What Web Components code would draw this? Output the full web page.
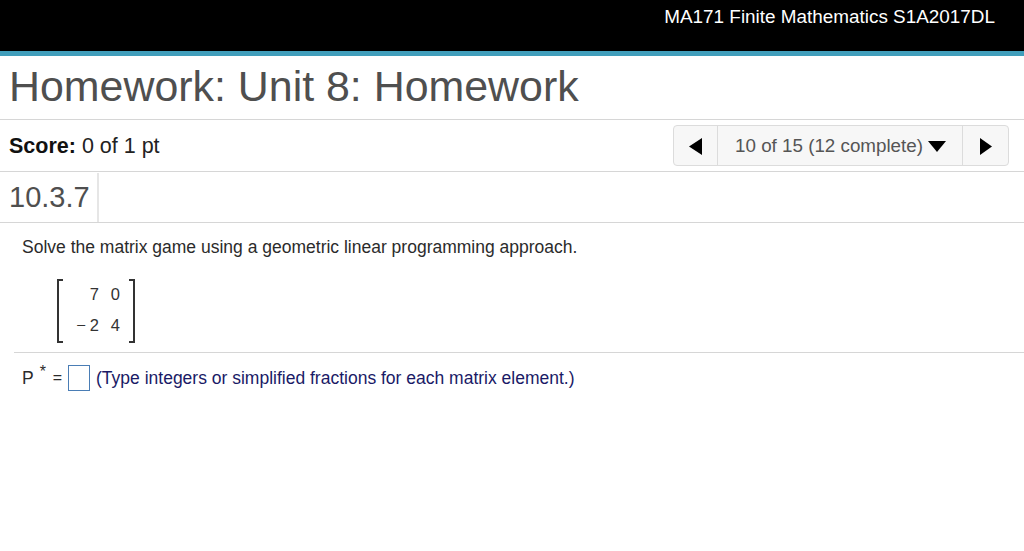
<!DOCTYPE html>
<html><head><meta charset="utf-8">
<style>
html,body{margin:0;padding:0;background:#fff;font-family:"Liberation Sans",Arial,sans-serif;}
body{width:1024px;height:551px;overflow:hidden}
</style></head>
<body>
<hw-topbar>MA171 Finite Mathematics S1A2017DL</hw-topbar>
<hw-title>Homework: Unit 8: Homework</hw-title>
<hw-score></hw-score>
<hw-qnum>10.3.7</hw-qnum>
<hw-question></hw-question>
<script>
function def(name, html){
  customElements.define(name, class extends HTMLElement{
    constructor(){super();this.attachShadow({mode:'open'}).innerHTML=html;}
  });
}
def('hw-topbar',`<style>
:host{display:flex;justify-content:flex-end;box-sizing:border-box;height:56px;background:#000;border-bottom:5px solid #419ebb;color:#fff;font-size:18.9px;line-height:21px;padding:6px 29px 0 0}
</style><slot></slot>`);
def('hw-title',`<style>
:host{display:block;box-sizing:border-box;height:64px;border-bottom:1px solid #d6d6d6;padding:6px 0 0 9px;color:#4f4f4f;font-size:42.9px;line-height:48px}
</style><slot></slot>`);
def('hw-nav',`<style>
:host{display:flex;box-sizing:border-box;height:41px;width:336px;border:1px solid #dcdcdc;border-radius:4px;background:#f7f7f7;color:#555;font-size:18.8px;align-items:stretch}
.b{display:flex;align-items:center;justify-content:center}
.l{width:44px;border-right:1px solid #dcdcdc;box-sizing:border-box;padding-top:3px}
.m{width:244px;gap:5px;box-sizing:border-box;padding:1px 0 0 1px}
.r{flex:1;border-left:1px solid #dcdcdc;padding-top:3px}
svg{display:block}
</style>
<div class="b l"><svg width="13" height="17" viewBox="0 0 13 17"><path d="M13 0V17L0 8.5Z" fill="#000"/></svg></div>
<div class="b m"><span>10 of 15 (12 complete)</span><svg width="18" height="11" viewBox="0 0 18 11" style="margin-top:2px"><path d="M0 0H18L9 11Z" fill="#000"/></svg></div>
<div class="b r"><svg width="12" height="17" viewBox="0 0 12 17"><path d="M0 0V17L12 8.5Z" fill="#000"/></svg></div>`);
def('hw-score',`<style>
:host{display:flex;align-items:center;justify-content:space-between;box-sizing:border-box;height:52px;border-bottom:1px solid #d6d6d6;padding:0 15px 1px 9px;font-size:21.5px;color:#222}
b{color:#111}
.s{position:relative;top:1px}
</style><span class="s"><b>Score:</b> 0 of 1 pt</span><hw-nav></hw-nav>`);
def('hw-qnum',`<style>
:host{display:block;box-sizing:border-box;height:50px;border-bottom:1px solid #d6d6d6;color:#4f4f4f;font-size:29px;}
div{box-sizing:border-box;width:99px;height:49px;margin-top:1px;border-right:2px solid #e6e6e6;padding:7px 0 0 9px;line-height:34px}
</style><div><slot></slot></div>`);
def('hw-matrix',`<style>
:host{display:block;box-sizing:border-box;width:78px;height:64px;position:relative;font-size:16.5px;line-height:20px;color:#333;margin-left:57px;padding:5px 0 0 11px}
.br{position:absolute;top:0;bottom:0;width:6px;border:2px solid #333;box-sizing:border-box}
.lb{left:0;border-right:0}
.rb{right:0;border-left:0}
.g{display:grid;grid-template-columns:18px 13px 21px;grid-template-rows:20px 20px;row-gap:11px;justify-items:end;width:52px}
</style><span class="br lb"></span><span class="br rb"></span>
<div class="g"><span></span><span>7</span><span>0</span><span>&minus;</span><span>2</span><span>4</span></div>`);
def('hw-question',`<style>
:host{display:block;font-size:17.5px;color:#2b2b2b;box-sizing:border-box;padding-top:14px}
.p{padding-left:22px;line-height:20px;height:20px}
.m{margin-top:22px;height:64px;display:flex;justify-content:flex-start}
hr{margin:9px 0 0 14px;border:0;border-top:1px solid #d6d6d6}
.ans{display:flex;align-items:center;margin:12px 0 0 22px;height:26px;line-height:24px}
sup{font-size:16px;line-height:0;position:relative;top:-6px;width:7px;margin-left:3px;left:3px;vertical-align:baseline}
.eq{margin-left:9px;font-size:16px}
.box{box-sizing:border-box;width:22px;height:26px;border:1px solid #4a7db5;margin:0 6px 0 6px;background:#fff}
.hint{color:#1a1a66}
</style>
<div class="p">Solve the matrix game using a geometric linear programming approach.</div>
<div class="m"><hw-matrix></hw-matrix></div>
<hr>
<div class="ans"><span>P</span><sup>*</sup><span class="eq">=</span><span class="box"></span><span class="hint">(Type integers or simplified fractions for each matrix element.)</span></div>`);
</script>
</body></html>
